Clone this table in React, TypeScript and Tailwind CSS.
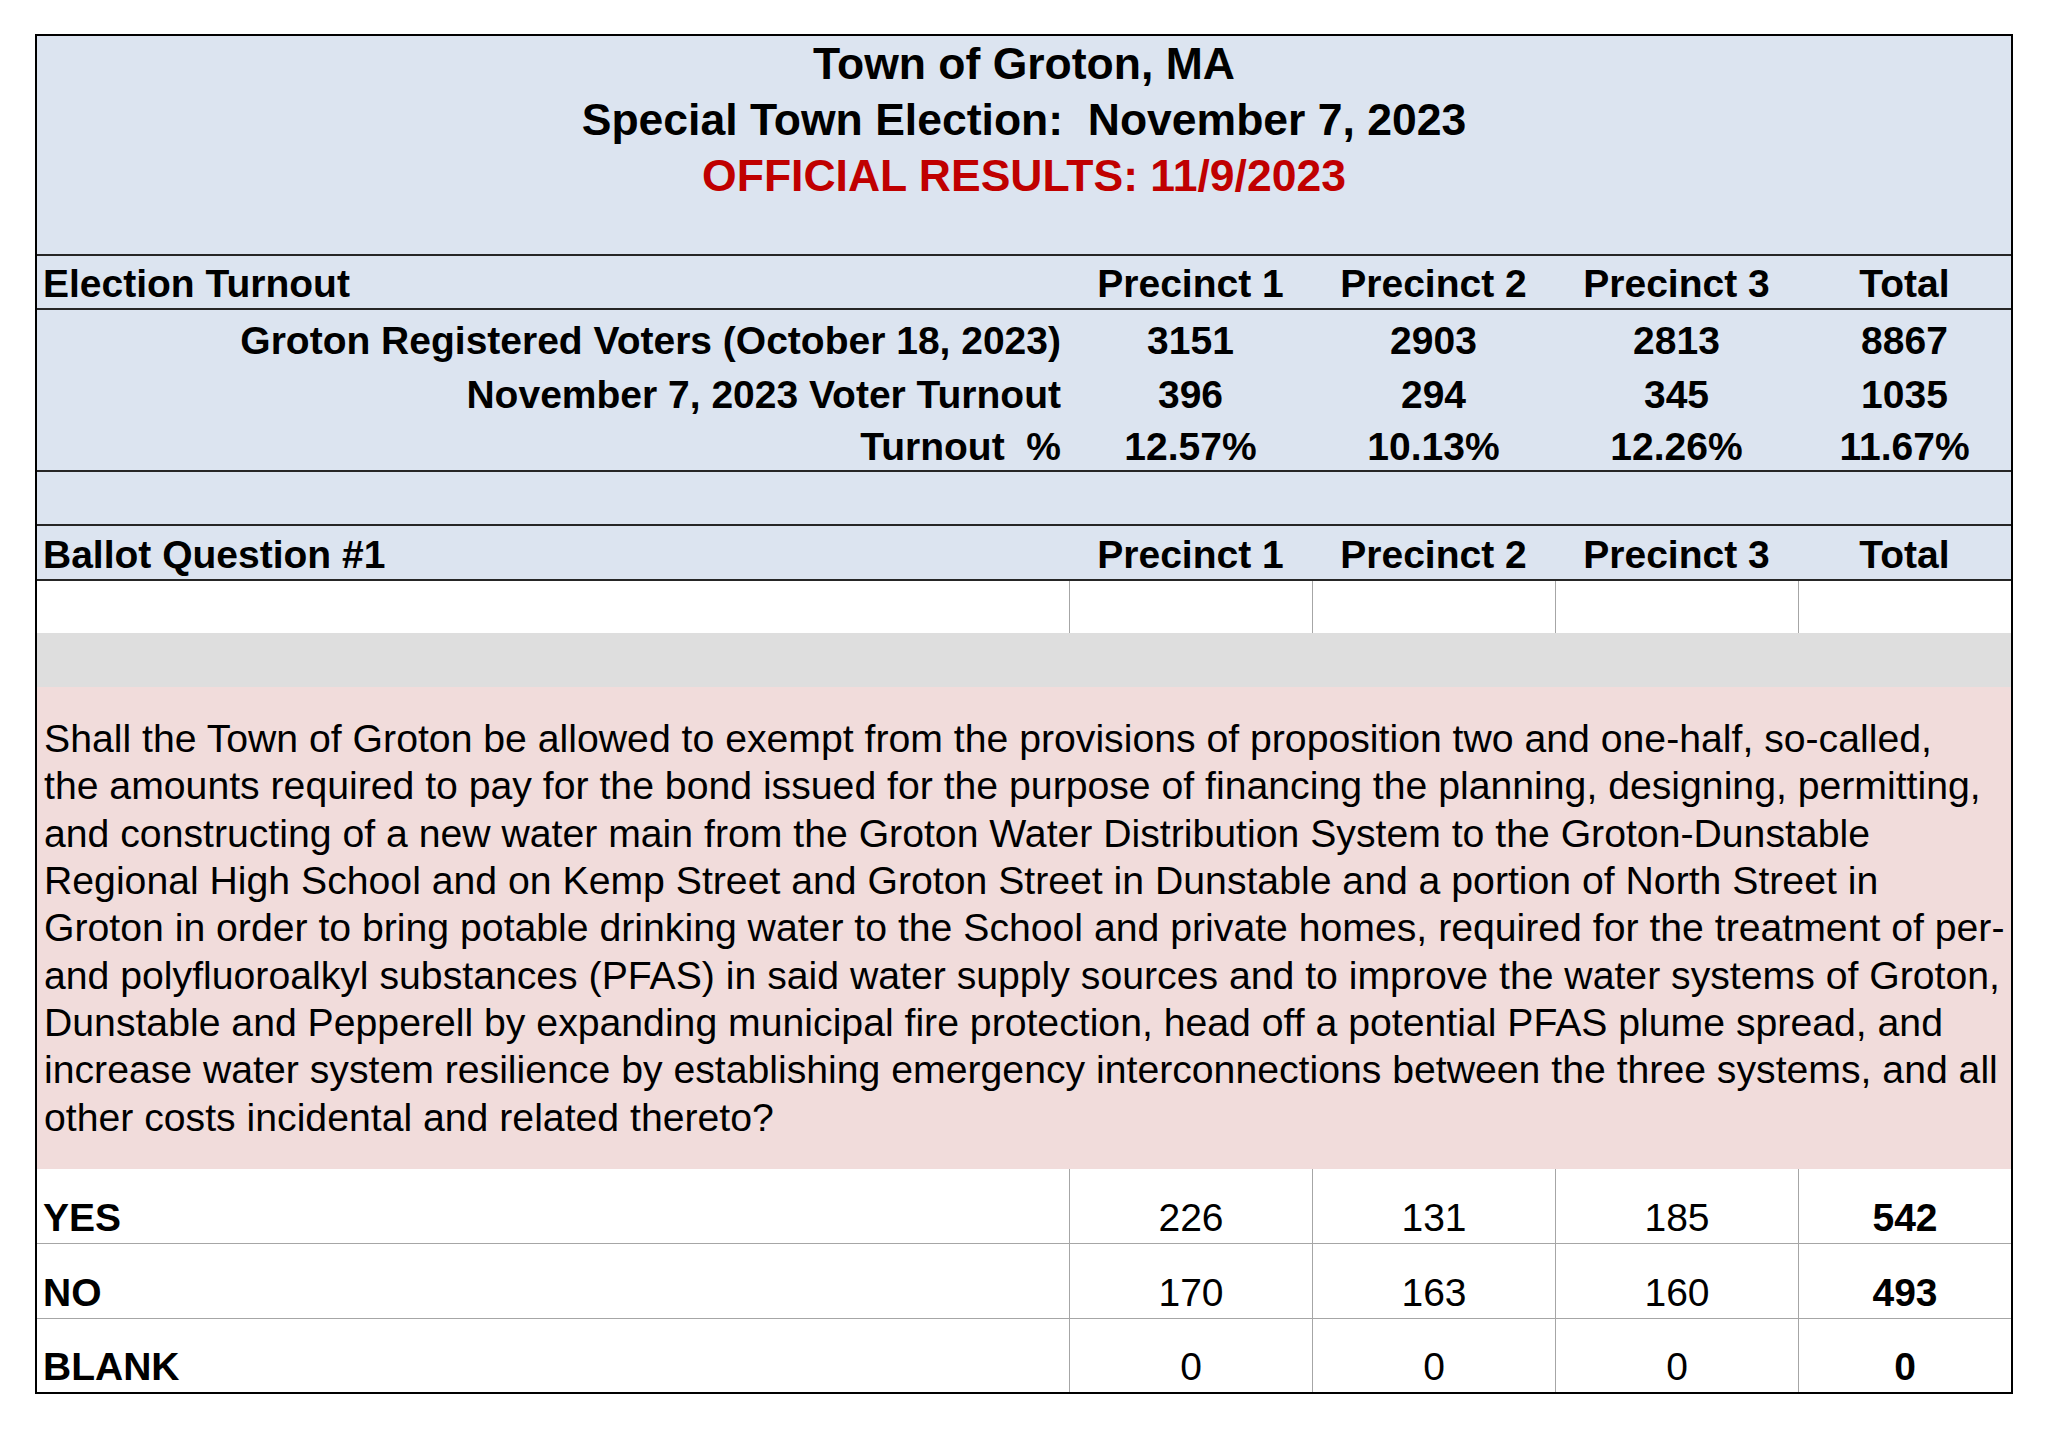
import React from "react";

const precincts = ["Precinct 1", "Precinct 2", "Precinct 3", "Total"];

const turnoutRows: { label: string; values: string[] }[] = [
  { label: "Groton Registered Voters (October 18, 2023)", values: ["3151", "2903", "2813", "8867"] },
  { label: "November 7, 2023 Voter Turnout", values: ["396", "294", "345", "1035"] },
  { label: "Turnout  %", values: ["12.57%", "10.13%", "12.26%", "11.67%"] },
];

const voteRows: { label: string; values: string[]; h: string }[] = [
  { label: "YES", values: ["226", "131", "185", "542"], h: "h-[75px] border-b border-[#a6a6a6]" },
  { label: "NO", values: ["170", "163", "160", "493"], h: "h-[75px] border-b border-[#a6a6a6]" },
  { label: "BLANK", values: ["0", "0", "0", "0"], h: "h-[73px]" },
];

const questionLines = [
  "Shall the Town of Groton be allowed to exempt from the provisions of proposition two and one-half, so-called,",
  "the amounts required to pay for the bond issued for the purpose of financing the planning, designing, permitting,",
  "and constructing of a new water main from the Groton Water Distribution System to the Groton-Dunstable",
  "Regional High School and on Kemp Street and Groton Street in Dunstable and a portion of North Street in",
  "Groton in order to bring potable drinking water to the School and private homes, required for the treatment of per-",
  "and polyfluoroalkyl substances (PFAS) in said water supply sources and to improve the water systems of Groton,",
  "Dunstable and Pepperell by expanding municipal fire protection, head off a potential PFAS plume spread, and",
  "increase water system resilience by establishing emergency interconnections between the three systems, and all",
  "other costs incidental and related thereto?",
];

const cols = "grid grid-cols-[1032px_243px_243px_243px_213px]";

const HeaderRow = ({ title, h }: { title: string; h: string }) => (
  <div className={`${cols} ${h} border-b-2 border-[#262626] bg-[#dce4f0] font-bold`}>
    <div className="flex items-end pb-[2px] pl-[6px]">{title}</div>
    {precincts.map((p) => (
      <div key={p} className="flex items-end justify-center pb-[2px]">
        {p}
      </div>
    ))}
  </div>
);

export default function App() {
  return (
    <div className="min-h-screen bg-white pt-[34px] pl-[35px] font-['Liberation_Sans',Arial,sans-serif] text-[39px] leading-[45px] text-black">
      <div className="w-[1978px] border-2 border-black">
        {/* title block */}
        <div className="h-[220px] border-b-2 border-[#262626] bg-[#dce4f0] text-center text-[44.5px] font-bold leading-[56px]">
          <div>Town of Groton, MA</div>
          <div className="whitespace-pre">Special Town Election:  November 7, 2023</div>
          <div className="text-[#c00000]">OFFICIAL RESULTS: 11/9/2023</div>
        </div>

        <HeaderRow title="Election Turnout" h="h-[54px]" />

        <div className="bg-[#dce4f0] font-bold">
          {turnoutRows.map((r, i) => (
            <div
              key={r.label}
              className={`${cols} h-[54px] ${i === turnoutRows.length - 1 ? "border-b-2 border-[#262626]" : ""}`}
            >
              <div className="flex items-end justify-end whitespace-pre pb-[1px] pr-[8px]">{r.label}</div>
              {r.values.map((v, j) => (
                <div key={j} className="flex items-end justify-center pb-[1px]">
                  {v}
                </div>
              ))}
            </div>
          ))}
        </div>

        <div className="h-[54px] border-b-2 border-[#262626] bg-[#dce4f0]" />

        <HeaderRow title="Ballot Question #1" h="h-[55px]" />

        <div className={`${cols} h-[52px] bg-white`}>
          <div />
          <div className="border-l border-[#a6a6a6]" />
          <div className="border-l border-[#a6a6a6]" />
          <div className="border-l border-[#a6a6a6]" />
          <div className="border-l border-[#a6a6a6]" />
        </div>

        <div className="h-[54px] bg-[#dedede]" />

        <div className="flex h-[482px] items-center bg-[#f1dcdb] pl-[7px] text-[39.2px] leading-[47.3px]">
          <p className="whitespace-nowrap">
            {questionLines.map((line, i) => (
              <React.Fragment key={i}>
                {line}
                {i < questionLines.length - 1 && <br />}
              </React.Fragment>
            ))}
          </p>
        </div>

        {voteRows.map((r) => (
          <div key={r.label} className={`${cols} ${r.h} bg-white`}>
            <div className="flex items-end pb-[3px] pl-[6px] font-bold">{r.label}</div>
            {r.values.map((v, j) => (
              <div
                key={j}
                className={`flex items-end justify-center border-l border-[#a6a6a6] pb-[3px] ${j === 3 ? "font-bold" : ""}`}
              >
                {v}
              </div>
            ))}
          </div>
        ))}
      </div>
    </div>
  );
}
